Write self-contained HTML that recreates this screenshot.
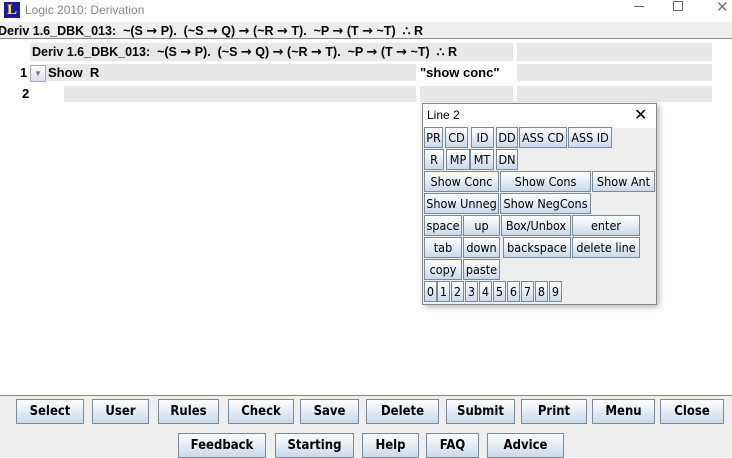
<!DOCTYPE html><html><head><style>
*{margin:0;padding:0;box-sizing:border-box}
body{width:732px;height:457px;position:relative;overflow:hidden;background:#fff;font-family:"Liberation Sans",sans-serif;font-size:13px;color:#000}
.a{position:absolute}
.g{position:absolute;background:#e8e8e8}
.r{font-family:"DejaVu Sans",sans-serif;font-size:13px;font-weight:bold}
.b{position:absolute;background:linear-gradient(#ffffff,#c9d9ea);border:1px solid #7a8a99;text-align:center;white-space:nowrap;overflow:hidden;font-family:"DejaVu Sans Condensed","DejaVu Sans",sans-serif}
.p .b{height:21px;line-height:19px;font-size:12.5px;font-weight:500}
.m .b{height:25px;line-height:23px;font-size:13px;font-weight:bold}
.h{font-weight:bold;font-size:12.5px;white-space:nowrap}
</style></head><body>
<div class="a" style="left:4px;top:2px;width:16px;height:16px;background:#1a1aa0;color:#ff0;font:bold 15px 'Liberation Serif',serif;text-align:center;line-height:16px">L</div>
<div class="a" style="left:25px;top:3px;color:#888;font-size:12px">Logic 2010: Derivation</div>
<div class="a" style="left:634px;top:6px;width:10px;height:1px;background:#666"></div>
<div class="a" style="left:673px;top:1px;width:10px;height:10px;border:1px solid #666"></div>
<div class="a" style="left:716px;top:-2px;color:#777;font-size:15px">✕</div>
<div class="a" style="left:0;top:22px;width:732px;height:17px;background:#eeeeee;border-bottom:1px solid #7a8a99"></div>
<div class="a h" style="left:-2px;top:23px">Deriv 1.6_DBK_013:&nbsp; ~(S <span class="r">→</span> P).&nbsp; (~S <span class="r">→</span> Q) <span class="r">→</span> (~R <span class="r">→</span> T).&nbsp; ~P <span class="r">→</span> (T <span class="r">→</span> ~T)&nbsp; ∴ R</div>
<div class="g" style="left:30px;top:43px;width:483px;height:18px"></div>
<div class="a h" style="left:32px;top:44px">Deriv 1.6_DBK_013:&nbsp; ~(S <span class="r">→</span> P).&nbsp; (~S <span class="r">→</span> Q) <span class="r">→</span> (~R <span class="r">→</span> T).&nbsp; ~P <span class="r">→</span> (T <span class="r">→</span> ~T)&nbsp; ∴ R</div>
<div class="g" style="left:517px;top:43px;width:195px;height:18px"></div>
<div class="a" style="left:20px;top:65px;font-weight:bold">1</div>
<div class="a" style="left:30px;top:65px;width:16px;height:17px;background:linear-gradient(#fff,#dde);border:1px solid #aab;font-size:8px;color:#777;text-align:center;line-height:15px">▼</div>
<div class="g" style="left:46px;top:64px;width:370px;height:17px"></div>
<div class="a" style="left:48px;top:65px;font-weight:bold">Show&nbsp; R</div>
<div class="a" style="left:420px;top:65px;font-weight:bold">"show conc"</div>
<div class="g" style="left:517px;top:64px;width:195px;height:17px"></div>
<div class="a" style="left:22px;top:86px;font-weight:bold">2</div>
<div class="g" style="left:64px;top:86px;width:352px;height:16px"></div>
<div class="g" style="left:420px;top:86px;width:93px;height:16px"></div>
<div class="g" style="left:517px;top:86px;width:195px;height:16px"></div>
<div class="a p" style="left:422px;top:103px;width:235px;height:202px;background:#eeeeee;border:1px solid #888;box-shadow:2px 2px 6px rgba(0,0,0,.3)">
<div class="a" style="left:0;top:0;width:233px;height:24px;background:#fff"></div>
<div class="a" style="left:4px;top:4px;font-size:12px">Line 2</div>
<div class="a" style="left:211px;top:1px;font-size:16px">✕</div>
</div>
<div class="p">
<div class="b" style="left:424px;top:127px;width:19px">PR</div>
<div class="b" style="left:445px;top:127px;width:23px">CD</div>
<div class="b" style="left:471px;top:127px;width:23px">ID</div>
<div class="b" style="left:496px;top:127px;width:22px">DD</div>
<div class="b" style="left:519px;top:127px;width:48px">ASS CD</div>
<div class="b" style="left:568px;top:127px;width:44px">ASS ID</div>
<div class="b" style="left:424px;top:149px;width:20px">R</div>
<div class="b" style="left:446px;top:149px;width:24px">MP</div>
<div class="b" style="left:470px;top:149px;width:24px">MT</div>
<div class="b" style="left:496px;top:149px;width:22px">DN</div>
<div class="b" style="left:424px;top:171px;width:75px">Show Conc</div>
<div class="b" style="left:500px;top:171px;width:91px">Show Cons</div>
<div class="b" style="left:592px;top:171px;width:63px">Show Ant</div>
<div class="b" style="left:424px;top:193px;width:75px">Show Unneg</div>
<div class="b" style="left:500px;top:193px;width:91px">Show NegCons</div>
<div class="b" style="left:424px;top:215px;width:38px">space</div>
<div class="b" style="left:463px;top:215px;width:37px">up</div>
<div class="b" style="left:501px;top:215px;width:70px">Box/Unbox</div>
<div class="b" style="left:572px;top:215px;width:68px">enter</div>
<div class="b" style="left:424px;top:237px;width:38px">tab</div>
<div class="b" style="left:463px;top:237px;width:37px">down</div>
<div class="b" style="left:503px;top:237px;width:68px">backspace</div>
<div class="b" style="left:572px;top:237px;width:68px">delete line</div>
<div class="b" style="left:424px;top:259px;width:38px">copy</div>
<div class="b" style="left:463px;top:259px;width:37px">paste</div>
<div class="b" style="left:424px;top:281px;width:13px">0</div>
<div class="b" style="left:437px;top:281px;width:13px">1</div>
<div class="b" style="left:451px;top:281px;width:13px">2</div>
<div class="b" style="left:465px;top:281px;width:13px">3</div>
<div class="b" style="left:479px;top:281px;width:13px">4</div>
<div class="b" style="left:493px;top:281px;width:13px">5</div>
<div class="b" style="left:507px;top:281px;width:13px">6</div>
<div class="b" style="left:521px;top:281px;width:13px">7</div>
<div class="b" style="left:535px;top:281px;width:13px">8</div>
<div class="b" style="left:549px;top:281px;width:13px">9</div>
</div>
<div class="a" style="left:0;top:395px;width:732px;height:62px;background:#eeeeee;border-top:1px solid #7a8a99"></div>
<div class="m">
<div class="b" style="left:16px;top:399px;width:68px">Select</div>
<div class="b" style="left:92px;top:399px;width:57px">User</div>
<div class="b" style="left:158px;top:399px;width:61px">Rules</div>
<div class="b" style="left:228px;top:399px;width:66px">Check</div>
<div class="b" style="left:300px;top:399px;width:59px">Save</div>
<div class="b" style="left:366px;top:399px;width:73px">Delete</div>
<div class="b" style="left:446px;top:399px;width:69px">Submit</div>
<div class="b" style="left:521px;top:399px;width:66px">Print</div>
<div class="b" style="left:592px;top:399px;width:63px">Menu</div>
<div class="b" style="left:660px;top:399px;width:64px">Close</div>
<div class="b" style="left:178px;top:433px;width:88px">Feedback</div>
<div class="b" style="left:275px;top:433px;width:79px">Starting</div>
<div class="b" style="left:362px;top:433px;width:57px">Help</div>
<div class="b" style="left:426px;top:433px;width:53px">FAQ</div>
<div class="b" style="left:487px;top:433px;width:77px">Advice</div>
</div>
</body></html>
